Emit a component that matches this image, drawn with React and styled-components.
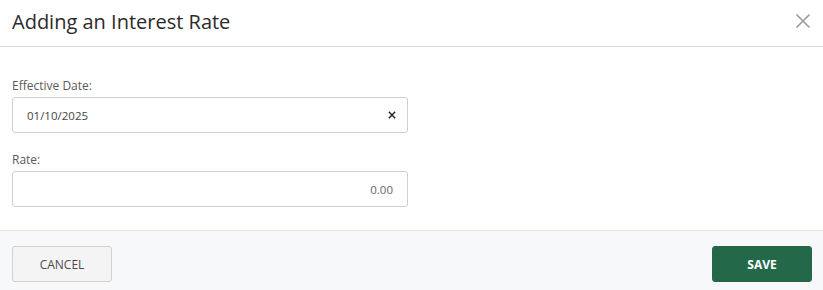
import React, { useState } from 'react';
import styled, { createGlobalStyle } from 'styled-components';

const GlobalStyle = createGlobalStyle`
  html, body {
    margin: 0;
    padding: 0;
    background: #fff;
    font-family: "Open Sans", "Noto Sans", sans-serif;
  }
`;

const Modal = styled.div`
  width: 823px;
  height: 290px;
  display: flex;
  flex-direction: column;
  background: #fff;
  overflow: hidden;
`;

const Header = styled.div`
  height: 47px;
  box-sizing: border-box;
  display: flex;
  align-items: center;
  justify-content: space-between;
  padding: 0 8px 4px 12px;
  border-bottom: 1px solid #dcdde3;
`;

const Title = styled.h2`
  margin: 0;
  font-size: 20px;
  font-weight: 400;
  color: #2b2b2b;
`;

const CloseButton = styled.button`
  border: none;
  background: none;
  padding: 0;
  width: 24px;
  height: 24px;
  display: flex;
  align-items: center;
  justify-content: center;
  cursor: pointer;
`;

const Body = styled.div`
  flex: 1;
  padding: 31px 12px 0 12px;
  display: flex;
  flex-direction: column;
  gap: 19px;
`;

const Field = styled.div`
  display: flex;
  flex-direction: column;
  width: 396px;
`;

const Label = styled.label`
  font-size: 12px;
  color: #5a5a5a;
  line-height: 16px;
  margin-bottom: 3px;
`;

const InputWrap = styled.div`
  height: 36px;
  box-sizing: border-box;
  border: 1px solid #cdd0d5;
  border-radius: 3px;
  background: #fff;
  display: flex;
  align-items: center;
`;

const Input = styled.input`
  flex: 1;
  border: none;
  outline: none;
  background: transparent;
  font-family: inherit;
  font-size: 11.5px;
  color: #444;
  padding: 0 14px;
  text-align: ${p => (p.$right ? 'right' : 'left')};
  height: 100%;
  &::placeholder {
    color: #666;
  }
`;

const ClearButton = styled.button`
  border: none;
  background: none;
  padding: 0;
  margin-right: 9px;
  width: 12px;
  height: 12px;
  display: flex;
  align-items: center;
  justify-content: center;
  cursor: pointer;
`;

const Footer = styled.div`
  height: 60px;
  box-sizing: border-box;
  border-top: 1px solid #e3e4e8;
  background: #f7f8fa;
  display: flex;
  align-items: flex-start;
  justify-content: space-between;
  padding: 15px 11px 0 12px;
`;

const Button = styled.button`
  width: 100px;
  height: 36px;
  box-sizing: border-box;
  border-radius: 3px;
  font-family: inherit;
  font-size: 12px;
  text-transform: uppercase;
  cursor: pointer;
  border: 1px solid ${p => (p.$primary ? '#24684a' : '#cfd1d5')};
  background: ${p => (p.$primary ? '#24684a' : '#f4f4f5')};
  color: ${p => (p.$primary ? '#fff' : '#4a4a4a')};
  font-weight: ${p => (p.$primary ? 700 : 400)};
`;

const App = () => {
  const [date, setDate] = useState('01/10/2025');
  const [rate, setRate] = useState('');

  return (
    <>
      <GlobalStyle />
      <Modal>
        <Header>
          <Title>Adding an Interest Rate</Title>
          <CloseButton aria-label="Close">
            <svg width="16" height="16" viewBox="0 0 16 16">
              <path d="M1.5 1.5 L14.5 14.5 M14.5 1.5 L1.5 14.5" stroke="#9a9a9a" strokeWidth="1.6" />
            </svg>
          </CloseButton>
        </Header>
        <Body>
          <Field>
            <Label>Effective Date:</Label>
            <InputWrap>
              <Input value={date} onChange={e => setDate(e.target.value)} />
              <ClearButton aria-label="Clear" onClick={() => setDate('')}>
                <svg width="8" height="8" viewBox="0 0 8 8">
                  <path d="M0.8 0.8 L7.2 7.2 M7.2 0.8 L0.8 7.2" stroke="#222" strokeWidth="1.4" />
                </svg>
              </ClearButton>
            </InputWrap>
          </Field>
          <Field>
            <Label>Rate:</Label>
            <InputWrap>
              <Input $right placeholder="0.00" value={rate} onChange={e => setRate(e.target.value)} />
            </InputWrap>
          </Field>
        </Body>
        <Footer>
          <Button>Cancel</Button>
          <Button $primary>Save</Button>
        </Footer>
      </Modal>
    </>
  );
};

export default App;
